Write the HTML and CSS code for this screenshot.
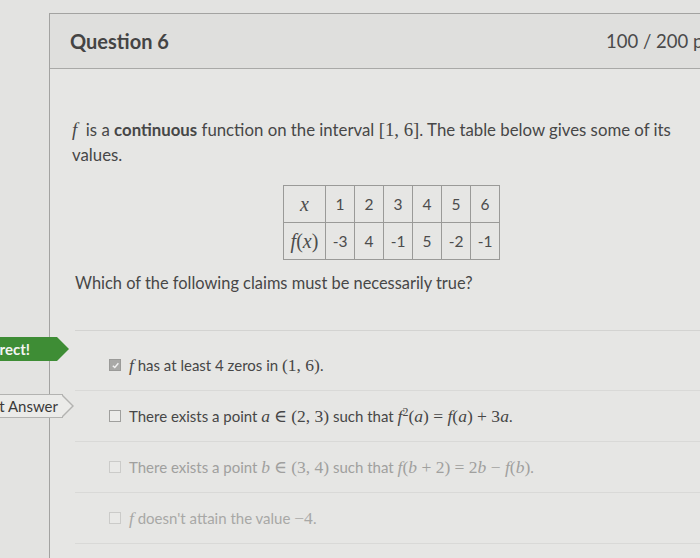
FILE: index.html
```
<!DOCTYPE html>
<html>
<head>
<meta charset="utf-8">
<link rel="stylesheet" href="styles.css">
</head>
<body>
<div class="page">
  <div class="card">
    <div class="header">
      <div class="title">Question 6</div>
      <div class="points">100 / 200 pts</div>
    </div>
    <div class="content">
      <p class="stem"><span class="mi">f</span>&nbsp; is a <b>continuous</b> function on the interval <span class="mn">[1, 6]</span>. The table below gives some of its values.</p>
      <table class="values">
        <tr><td class="head"><span class="mi">x</span></td><td>1</td><td>2</td><td>3</td><td>4</td><td>5</td><td>6</td></tr>
        <tr><td class="head"><span class="mi">f</span><span class="mn">(</span><span class="mi">x</span><span class="mn">)</span></td><td>-3</td><td>4</td><td>-1</td><td>5</td><td>-2</td><td>-1</td></tr>
      </table>
      <p class="ask">Which of the following claims must be necessarily true?</p>
      <div class="answers">
        <div class="answer">
          <div class="tag tag-correct">Correct!</div>
          <span class="box checked"><svg viewBox="0 0 10 10" width="9" height="9"><path d="M2 5.2 L4.2 7.3 L8.2 2.6" fill="none" stroke="#f2f2f2" stroke-width="1.6"/></svg></span>
          <span class="txt"><span class="mi">f</span> has at least 4 zeros in <span class="mn">(1, 6)</span>.</span>
        </div>
        <div class="answer">
          <div class="tag tag-answer">Correct Answer</div>
          <span class="box"></span>
          <span class="txt">There exists a point <span class="mi">a</span> <span class="mn">∈ (2, 3)</span> such that <span class="mi">f</span><sup class="mn">2</sup><span class="mn">(</span><span class="mi">a</span><span class="mn">) = </span><span class="mi">f</span><span class="mn">(</span><span class="mi">a</span><span class="mn">) + 3</span><span class="mi">a</span>.</span>
        </div>
        <div class="answer faded">
          <span class="box"></span>
          <span class="txt">There exists a point <span class="mi">b</span> <span class="mn">∈ (3, 4)</span> such that <span class="mi">f</span><span class="mn">(</span><span class="mi">b</span><span class="mn"> + 2) = 2</span><span class="mi">b</span><span class="mn"> − </span><span class="mi">f</span><span class="mn">(</span><span class="mi">b</span><span class="mn">)</span>.</span>
        </div>
        <div class="answer faded lighter">
          <span class="box"></span>
          <span class="txt"><span class="mi">f</span> doesn't attain the value <span class="mn">−4</span>.</span>
        </div>
      </div>
    </div>
  </div>
</div>
</body>
</html>
```
FILE: styles.css
```
html, body {
  margin: 0;
  padding: 0;
  width: 700px;
  height: 558px;
  overflow: hidden;
  background: #e3e3e1;
  font-family: Lato, "Open Sans", sans-serif;
  color: #474747;
}
.page {
  padding-top: 13px;
  padding-left: 49px;
}
.card {
  width: 760px;
  height: 560px;
  border-top: 1px solid #a3a3a1;
  border-left: 1px solid #a3a3a1;
  background: #e6e6e4;
}
.header {
  height: 54px;
  background: #dfdfdd;
  border-bottom: 1px solid #a9a9a7;
  display: grid;
  grid-template-columns: 536px auto;
  align-items: center;
  padding-left: 20px;
}
.title {
  font-size: 20px;
  font-weight: 700;
  color: #444;
}
.points {
  font-size: 18.5px;
  color: #4a4a4a;
  white-space: nowrap;
}
.content {
  padding-left: 22px;
  padding-top: 48px;
}
.stem {
  margin: 0;
  width: 612px;
  font-size: 16.8px;
  line-height: 25px;
}
.stem b { font-weight: 700; }
.mi {
  font-family: "Liberation Serif", "DejaVu Serif", serif;
  font-style: italic;
  font-size: 1.12em;
}
.mn {
  font-family: "Liberation Serif", "DejaVu Serif", serif;
  font-size: 1.12em;
}
sup.mn { font-size: 0.75em; line-height: 0; }
.values {
  margin-top: 18px;
  margin-left: 211px;
  border-collapse: collapse;
  font-size: 15.5px;
  color: #4c4c4c;
}
.values td {
  border: 1px solid #9a9a98;
  height: 36px;
  width: 28px;
  padding: 0;
  text-align: center;
}
.values td.head {
  width: 41px;
}
.values td.head .mi { font-size: 20px; }
.values td.head .mn { font-size: 20px; }
.ask {
  margin: 11px 0 0 3px;
  font-size: 16.4px;
  line-height: 24px;
}
.answers {
  margin-top: 35px;
  margin-left: 3px;
  border-top: 1px solid #d3d3d1;
  padding-top: 9px;
}
.answer {
  position: relative;
  height: 50px;
  border-bottom: 1px solid #d9d9d7;
  display: flex;
  align-items: center;
  padding-left: 34px;
  font-size: 15px;
  color: #474747;
}
.answer .txt .mi, .answer .txt .mn { font-size: 17.5px; }
.answer .txt sup.mn { font-size: 12px; }
.box {
  width: 10px;
  height: 10px;
  border: 1px solid #9f9f9d;
  background: #ececea;
  margin-right: 8px;
  display: inline-flex;
  align-items: center;
  justify-content: center;
  flex: none;
}
.box.checked {
  background: #a9a9a7;
  border-color: #9a9a98;
}
.faded { color: #a0a09e; }
.faded .box { border-color: #cbcbc9; background: #e9e9e7; }
.lighter { color: #a8a8a6; }
.tag {
  position: absolute;
  box-sizing: border-box;
  height: 24px;
  line-height: 24px;
  font-size: 15px;
  white-space: nowrap;
  text-align: right;
}
.tag-correct {
  left: -108px;
  top: -3px;
  width: 90px;
  padding-right: 27px;
  background: #3e8d35;
  color: #f4f4f2;
  font-weight: 700;
}
.tag-correct::after {
  content: "";
  position: absolute;
  right: -12px;
  top: 0;
  border-top: 12px solid transparent;
  border-bottom: 12px solid transparent;
  border-left: 12px solid #3e8d35;
}
.tag-answer {
  left: -130px;
  top: 3px;
  width: 118px;
  padding-right: 4px;
  height: 24px;
  line-height: 22px;
  background: #ebebe9;
  border: 1px solid #b3b3b1;
  border-left: none;
  color: #3a3a3a;
}
.tag-answer::before {
  content: "";
  position: absolute;
  right: -12px;
  top: -1px;
  border-top: 12px solid transparent;
  border-bottom: 12px solid transparent;
  border-left: 12px solid #b3b3b1;
}
.tag-answer::after {
  content: "";
  position: absolute;
  right: -10px;
  top: 0;
  border-top: 11px solid transparent;
  border-bottom: 11px solid transparent;
  border-left: 11px solid #ebebe9;
}
```
